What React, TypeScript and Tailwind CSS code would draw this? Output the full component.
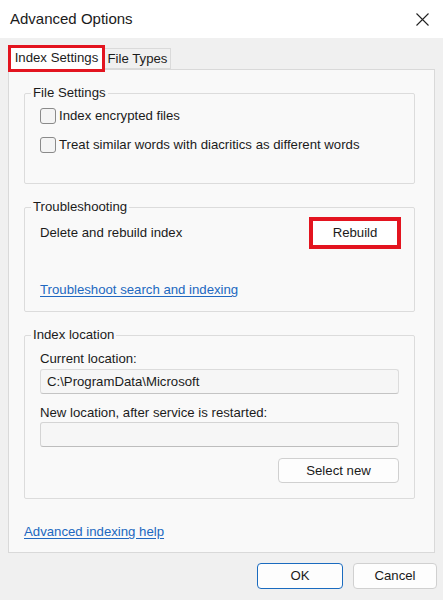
import React from 'react';

const font = { fontFamily: '"Liberation Sans", Arial, sans-serif' };

function Checkbox({ label }: { label: string }) {
  return (
    <label className="flex items-center h-[16px] gap-[3px]">
      <span className="w-[16px] h-[16px] rounded-[3px] border border-[#8a8a8a] bg-[#f4f4f4]" />
      <span>{label}</span>
    </label>
  );
}

function Group({ title, className, children }: { title: string; className?: string; children: React.ReactNode }) {
  return (
    <fieldset className={`border border-[#dcdcdc] rounded-[2px] pl-[15px] pr-[12px] ${className ?? ''}`}>
      <legend className="-ml-[9px] px-[2px] leading-[16px]">{title}</legend>
      {children}
    </fieldset>
  );
}

function WinButton({ children, className }: { children: React.ReactNode; className?: string }) {
  return (
    <button
      type="button"
      className={`h-[25px] rounded-[4px] border border-[#d0d0d0] bg-[#fdfdfd] text-[#1a1a1a] flex items-center justify-center ${className ?? ''}`}
    >
      {children}
    </button>
  );
}

export default function App() {
  return (
    <div className="w-[443px] h-[600px] bg-[#f0f0f0] flex flex-col text-[13.2px] text-[#1b1b1b] overflow-hidden" style={font}>
      {/* title bar */}
      <div className="h-[38px] bg-white flex items-center justify-between pl-[10px] pr-[14px] shrink-0">
        <span className="text-[15px] text-[#1a1a1a] pt-[1px]">Advanced Options</span>
        <svg width="13" height="13" viewBox="0 0 13 13" className="mt-[1px]">
          <path d="M0.5 0.5 L12.5 12.5 M12.5 0.5 L0.5 12.5" stroke="#222" strokeWidth="1.1" />
        </svg>
      </div>

      <div className="px-[8px] pt-[7px] flex flex-col">
        {/* tabs */}
        <div className="flex items-start h-[27px]">
          <div className="relative z-10 h-[27px] w-[97px] border-[3px] border-[#e3141f] bg-white flex items-center justify-center pb-[1px]">
            Index Settings
          </div>
          <div className="mt-[3px] h-[21px] w-[66px] border border-l-0 border-[#dadada] bg-[#f0f0f0] flex items-center justify-center pt-[1px]">
            File Types
          </div>
        </div>

        {/* tab panel */}
        <div className="-mt-[3px] h-[484px] border border-[#d9d9d9] bg-[#f9f9f9] pl-[15px] pr-[19px] pt-[15px] flex flex-col">
          <Group title="File Settings" className="h-[99px]">
            <div className="flex flex-col gap-[13px] pt-[7px]">
              <Checkbox label="Index encrypted files" />
              <Checkbox label="Treat similar words with diacritics as different words" />
            </div>
          </Group>

          <Group title="Troubleshooting" className="mt-[15px] h-[113px] pr-[13px]">
            <div className="flex items-center justify-between pt-[2px]">
              <span>Delete and rebuild index</span>
              <div className="w-[92px] h-[32px] border-[4px] border-[#e3141f] bg-white flex items-center justify-center">
                Rebuild
              </div>
            </div>
            <div className="mt-[31px]">
              <span className="text-[#2168c0] underline underline-offset-[2px]">Troubleshoot search and indexing</span>
            </div>
          </Group>

          <Group title="Index location" className="mt-[15px] h-[172px] pr-[15px]">
            <div className="flex flex-col pt-[8px]">
              <span className="leading-[16px]">Current location:</span>
              <div className="mt-[2px] h-[25px] rounded-[3px] border border-[#dcdcdc] border-b-[#c4c4c4] bg-[#f6f6f6] flex items-center pl-[6px]">
                C:\ProgramData\Microsoft
              </div>
              <span className="mt-[11px] leading-[16px]">New location, after service is restarted:</span>
              <div className="mt-[1px] h-[25px] rounded-[3px] border border-[#d4d4d4] border-b-[#bdbdbd] bg-[#f6f6f6]" />
              <div className="flex justify-end mt-[11px]">
                <WinButton className="w-[121px]">Select new</WinButton>
              </div>
            </div>
          </Group>

          <div className="mt-[23px]">
            <span className="text-[#2168c0] underline underline-offset-[2px]">Advanced indexing help</span>
          </div>
        </div>

        {/* footer */}
        <div className="flex justify-end gap-[10px] mt-[10px] -mr-[2px]">
          <WinButton className="w-[86px] h-[26px] !border-[#1a6bbf]">OK</WinButton>
          <WinButton className="w-[84px] h-[26px]">Cancel</WinButton>
        </div>
      </div>
    </div>
  );
}
